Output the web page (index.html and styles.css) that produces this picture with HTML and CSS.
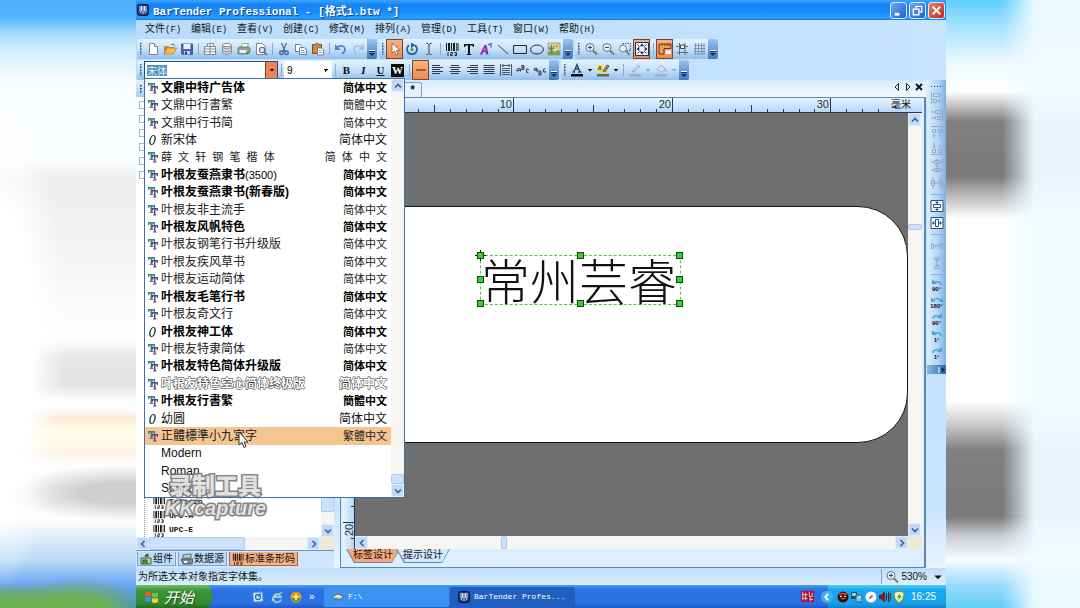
FILE: index.html
```html
<!DOCTYPE html>
<html lang="zh-CN">
<head>
    <meta charset="UTF-8">
    <meta name="viewport" content="width=device-width, initial-scale=1.0">
    <title>BarTender Professional - [格式1.btw *]</title>
    <link rel="stylesheet" href="styles.css">
</head>
<body>
    <!-- icon sprite -->
    <svg class="sprite" aria-hidden="true">
        <symbol id="i-app" viewBox="0 0 12 12"><rect x=".5" y=".5" width="11" height="11" rx="2" fill="#1a3a7c" stroke="#0b1c4c"/><path d="M3 2v5q0 2 1.500 2M6 2v8M9 2v5q0 2-1.500 2M4.500 2v5M7.500 2v5" stroke="#dfeaff" fill="none"/></symbol>
        <symbol id="i-new" viewBox="0 0 14 14"><path d="M3.500 1.500h5l3 3v8h-8z" fill="#fff" stroke="#7b8797"/><path d="M8.500 1.500v3h3" fill="#dde6f0" stroke="#7b8797"/></symbol>
        <symbol id="i-open" viewBox="0 0 14 14"><path d="M1 12V4h4l1 1h5v7z" fill="#c98a2b"/><path d="M1 12l3-6h9.500l-3 6z" fill="#f4bb52" stroke="#a7701c" stroke-width=".6"/><path d="M8 2.500q3-1.500 4 1.500" stroke="#4a76b8" fill="none"/></symbol>
        <symbol id="i-save" viewBox="0 0 14 14"><path d="M1.500 2h11v10.500h-10l-1-1z" fill="#4a5fb4" stroke="#2c3a80" stroke-width=".7"/><path d="M3.500 2h7v5h-7z" fill="#eef2fb"/><path d="M4 9h6v3.500H4z" fill="#c7d0ea"/><path d="M5 9.500h2v3H5z" fill="#2c3a80"/></symbol>
        <symbol id="i-table" viewBox="0 0 14 14"><path d="M4.500 1.500h6v4h-6z" fill="#fff" stroke="#7f8b98"/><path d="M1.500 4.500h11v8h-11zM1.500 7h11M1.500 9.800h11M7 1.500v11" fill="#fff" stroke="#7c8894"/></symbol>
        <symbol id="i-db" viewBox="0 0 14 14"><path d="M2.500 3v8q4.500 3 9 0V3" fill="#d6dade" stroke="#858d94"/><ellipse cx="7" cy="3" rx="4.500" ry="1.700" fill="#f4f6f7" stroke="#858d94"/><path d="M2.500 5.500q4.500 3 9 0M2.500 8.500q4.500 3 9 0" fill="none" stroke="#858d94"/></symbol>
        <symbol id="i-print" viewBox="0 0 14 14"><path d="M4 6l1.500-4.500h6L10 6z" fill="#fff" stroke="#7d8a83" stroke-width=".7"/><path d="M1 6l2-1h8.500l1.500 1v4l-2 2H1z" fill="#8ba295" stroke="#4d6a58" stroke-width=".7"/><path d="M2.500 8h7v3h-7z" fill="#eef5ef"/><path d="M9 10h3v2H9z" fill="#35a046"/></symbol>
        <symbol id="i-preview" viewBox="0 0 14 14"><path d="M2.500 1.500h6l2.500 2.500v8.500H2.500z" fill="#fff" stroke="#7d8896"/><circle cx="8" cy="8" r="2.800" fill="#cfe6f8" stroke="#49606f"/><path d="M10 10l3 3" stroke="#8a6a42" stroke-width="1.600"/></symbol>
        <symbol id="i-cut" viewBox="0 0 14 14"><path d="M4.500 1l3.500 8M9.500 1L6 9" stroke="#47648f" stroke-width="1.200"/><circle cx="4.500" cy="10.800" r="1.800" fill="none" stroke="#3c5d96" stroke-width="1.300"/><circle cx="9.500" cy="10.800" r="1.800" fill="none" stroke="#3c5d96" stroke-width="1.300"/></symbol>
        <symbol id="i-copy" viewBox="0 0 14 14"><path d="M1.500 2.500h4.500l2 2v5H1.500z" fill="#fff" stroke="#6684b4"/><path d="M5.500 5.500h4.500l2.500 2v5h-7z" fill="#e8f1fc" stroke="#6684b4"/><path d="M7 8.500h3M7 10.500h4" stroke="#8aa5cf"/></symbol>
        <symbol id="i-paste" viewBox="0 0 14 14"><path d="M1.500 2.500h9v9h-9z" fill="#d08a3a" stroke="#7e4c1c"/><path d="M4 1h4v3H4z" fill="#8f8d88"/><path d="M6.500 6h4l2 2v5h-6z" fill="#fff" stroke="#6b6a75" stroke-width=".8"/><path d="M8 8.500h2M8 10.500h3" stroke="#98a2b5"/></symbol>
        <symbol id="i-undo" viewBox="0 0 14 14"><path d="M3 5q7-3 8 2 0 3-3 5" fill="none" stroke="#5484c8" stroke-width="1.700"/><path d="M1 2v6h6z" fill="#5484c8"/></symbol>
        <symbol id="i-redo" viewBox="0 0 14 14"><path d="M11 5Q4 2 3 7q0 3 3 5" fill="none" stroke="#a9bdd5" stroke-width="1.500"/><path d="M13 2v6H7z" fill="#a9bdd5"/></symbol>
        <symbol id="i-pointer" viewBox="0 0 14 14"><path d="M4 1v10l2.500-2 1.700 4 1.800-.8-1.700-3.700H12z" fill="#fff" stroke="#7a5a48" stroke-width=".8"/></symbol>
        <symbol id="i-rotate" viewBox="0 0 14 14"><path d="M4 3.200A5 5 0 1 0 10 3.200" fill="none" stroke="#1f5f9c" stroke-width="1.700"/><path d="M6 .5l4.500 2.700L6 6z" fill="#1f5f9c"/><circle cx="7" cy="7.500" r="1.500" fill="#3f9b4d"/></symbol>
        <symbol id="i-ibeam" viewBox="0 0 14 14"><path d="M4.500 1.500H6l1 1 1-1h1.500M4.500 12.500H6l1-1 1 1h1.500M7 2.500v9" fill="none" stroke="#2f3a4a"/></symbol>
        <symbol id="i-barcode" viewBox="0 0 14 14"><path d="M1 1h1v8H1zM3 1h2v8H3zM6 1h1v8H6zM8 1h2v8H8zM11 1h.7v8H11zM12.500 1h1v8h-1z" fill="#1b1b1b"/><path d="M3 10v4M5.500 10.500h2v1.500h-2v1.500h2M9.500 10.500h2v3h-2M10 12h1.500" stroke="#1b1b1b" fill="none" stroke-width=".9"/></symbol>
        <symbol id="i-text" viewBox="0 0 14 14"><path d="M2 2h10v3h-1L10.500 3.500H8V12h1.200v1H4.800v-1H6V3.500H3.500L3 5H2z" fill="#151515"/></symbol>
        <symbol id="i-wordart" viewBox="0 0 14 14"><path d="M1 12.500L5.500 3h2l2 9.500H7L6.600 10H4.300l-1 2.500zM5 8.500h1.500L6 5.500z" fill="#8b2d9c"/><path d="M9 3l3-1.500v4" fill="none" stroke="#3461b3" stroke-width="1.200"/></symbol>
        <symbol id="i-line" viewBox="0 0 14 14"><path d="M2 3l10 9" stroke="#33455e"/></symbol>
        <symbol id="i-rect" viewBox="0 0 14 14"><path d="M.5 3.500h13v8H.5z" fill="none" stroke="#1e2b3a"/></symbol>
        <symbol id="i-ellipse" viewBox="0 0 14 14"><ellipse cx="7" cy="7.500" rx="6.400" ry="4.500" fill="none" stroke="#1e2b3a"/></symbol>
        <symbol id="i-picture" viewBox="0 0 14 14"><path d="M1 1h12v12H1z" fill="#d9d3a5" stroke="#8b8f67" stroke-width=".7"/><path d="M1 10l4-2 3 2 3-2 2 2v3H1z" fill="#7fa04a"/><circle cx="9.500" cy="4" r="1.500" fill="#e0a13a"/><path d="M4.500 3v8M2.500 5v2h2M6.500 4.500v2h-2" stroke="#3d8f46" fill="none" stroke-width="1.200"/></symbol>
        <symbol id="i-zoomin" viewBox="0 0 14 14"><circle cx="6" cy="5.500" r="4" fill="#e3f1fc" stroke="#5f7488"/><path d="M4 5.500h4M6 3.500v4" stroke="#2f4a63"/><path d="M9 8.500l4 4" stroke="#8b7250" stroke-width="1.800"/></symbol>
        <symbol id="i-zoomout" viewBox="0 0 14 14"><circle cx="6" cy="5.500" r="4" fill="#e3f1fc" stroke="#5f7488"/><path d="M4 5.500h4" stroke="#2f4a63"/><path d="M9 8.500l4 4" stroke="#8b7250" stroke-width="1.800"/></symbol>
        <symbol id="i-zoomarea" viewBox="0 0 14 14"><path d="M4.500 1.500h8v7h-8z" fill="none" stroke="#3f556c" stroke-dasharray="1.500 1"/><circle cx="5" cy="6.500" r="3.500" fill="#e3f1fc" stroke="#6d8296"/><path d="M8 9l3.500 4" stroke="#8b7250" stroke-width="1.600"/></symbol>
        <symbol id="i-fit" viewBox="0 0 14 14"><path d="M.5 .5h13v13H.5z" fill="#eef6ff" stroke="#22324c"/><path d="M7 1.500l2.300 2.800H4.700zM7 12.500l2.300-2.800H4.700zM1.500 7l2.800-2.300v4.600zM12.500 7L9.700 4.700v4.600z" fill="#20365e"/><path d="M2.500 2.500l2 2M11.500 2.500l-2 2M2.500 11.500l2-2M11.500 11.500l-2-2" stroke="#20365e"/></symbol>
        <symbol id="i-ruler" viewBox="0 0 14 14"><path d="M1 2h12v4.500H6V12H1z" fill="#f0a04e" stroke="#6e2f0e"/><path d="M4 2v2M6.500 2v2M9 2v2M11 2v2" stroke="#6e2f0e" stroke-width=".8"/><path d="M7.500 8.500h5.500V12H7.500z" fill="#fff"/></symbol>
        <symbol id="i-snap" viewBox="0 0 14 14"><path d="M1 4.500h3M10 4.500h3M4.500 1v12M10 1v12M2 10.500h11" stroke="#5c6f86" fill="none"/><path d="M5.500 3h4v3.500h-4z" fill="#eaf4fd" stroke="#38495c"/></symbol>
        <symbol id="i-grid" viewBox="0 0 14 14"><path d="M2 3.500h11M2 6.500h11M2 9.500h11M3.500 1v11M6.500 1v11M9.500 1v11M12 1v11M2 12h11" stroke="#6f86a2" stroke-width=".8"/></symbol>
        <symbol id="i-single" viewBox="0 0 14 14"><path d="M2 7h10" stroke="#703717" stroke-width="1.200"/></symbol>
        <symbol id="i-left" viewBox="0 0 14 14"><path d="M1 2.500h8M1 4.500h11M1 6.500h8M1 8.500h11M1 10.500h8" stroke="#2d3c50"/></symbol>
        <symbol id="i-center" viewBox="0 0 14 14"><path d="M3 2.500h8M1.500 4.500h11M3 6.500h8M1.500 8.500h11M3 10.500h8" stroke="#2d3c50"/></symbol>
        <symbol id="i-right" viewBox="0 0 14 14"><path d="M5 2.500h8M2 4.500h11M5 6.500h8M2 8.500h11M5 10.500h8" stroke="#2d3c50"/></symbol>
        <symbol id="i-just" viewBox="0 0 14 14"><path d="M1.500 2.500h11M1.500 4.500h11M1.500 6.500h11M1.500 8.500h11M1.500 10.500h11" stroke="#2d3c50"/></symbol>
        <symbol id="i-fulljust" viewBox="0 0 14 14"><path d="M1.500 1v12M12.500 1v12M3 2.500h8M3 5.500h8M3 7.500h8M3 9.500h8M3 11.500h8M4.500 1L3 2.500 4.500 4M9.500 1L11 2.500 9.500 4" stroke="#3c4a5c" stroke-width=".9" fill="none"/></symbol>
        <symbol id="i-arcup" viewBox="0 0 14 14"><path d="M1 8.500q0-3 2-3t1.500 3M1.200 7.500h3M6 2.500v4h1.500q1.300-1 0-2 1-1-.3-2zM13 6.500q-2.500-1.500-2.500 1t2 2" fill="none" stroke="#33414f" stroke-width="1.100"/></symbol>
        <symbol id="i-arcdown" viewBox="0 0 14 14"><path d="M1 7.500q1-3 2.500-2t.5 3.500M1.200 6.800l3 1M6 8v4h1.500q1.300-1 0-2 1-1-.3-2zM12.500 5.500q-2.500.5-2 2.500t2.500.5" fill="none" stroke="#33414f" stroke-width="1.100"/></symbol>
        <symbol id="i-color" viewBox="0 0 14 14"><path d="M2.500 9h2.300M8 9h3.500M3.800 9L7 1.500 10 9M5 6h4" stroke="#233f7a" stroke-width="1.300" fill="none"/><path d="M1 11h12v2.500H1z" fill="#0a0a0a"/></symbol>
        <symbol id="i-high" viewBox="0 0 14 14"><path d="M1 2h6v7H1z" fill="#f0dc4c"/><path d="M2 7l2-4 1 4M7 8l4-6 2 1-4 6z" fill="#b09a38" stroke="#4b431e" stroke-width=".8"/><path d="M1 11h12v2.500H1z" fill="#6f6428"/></symbol>
        <symbol id="i-pen" viewBox="0 0 14 14"><path d="M4 8l6-6 2 1.500-6 5.500H4z" fill="#c3d3e6" stroke="#93a7bf" stroke-width=".8"/><path d="M1 11h12v2.500H1z" fill="#9db0c6"/></symbol>
        <symbol id="i-bucket" viewBox="0 0 14 14"><path d="M3 6l4-4 4 4-4 3.500z" fill="#d7e2ee" stroke="#93a7bf"/><path d="M11.500 6q1.500 2.500 0 3" fill="none" stroke="#93a7bf"/><path d="M1 11h12v2.500H1z" fill="#9db0c6"/></symbol>
        <symbol id="i-tt" viewBox="0 0 12 12"><path d="M1 1h7v3H7L6.500 2.500h-1V8h1v1h-4V8h1V2.500h-1L2 4H1z" fill="#2f8a86"/><path d="M4.500 4H11v3h-1l-.5-1.500h-1V10.500h1v1H6v-1h1V5.500H6L5.500 7h-1z" fill="#6b3f86"/></symbol>
        <symbol id="i-ot" viewBox="0 0 12 12"><path fill-rule="evenodd" d="M6.500 1Q9.500 1 8.700 5.500 7.700 11 4.300 11 1.500 11 2.300 6.500 3.300 1 6.500 1zM6.300 2Q4.500 2 3.800 6.500 3.300 10 4.600 10 6.400 10 7.200 5.500 7.700 2 6.300 2z" fill="#2a4f4f"/></symbol>
        <symbol id="i-alignl" viewBox="0 0 14 14"><path d="M1.500 1v12M3.500 2.500h6v3h-6zM3.500 8.500h3v3h-3zM8 10h4M10 8.500L8 10l2 1.500"/></symbol>
        <symbol id="i-alignr" viewBox="0 0 14 14"><path d="M12.500 1v12M5.500 2.500h5v3h-5zM7.500 8.500h3v3h-3zM1 4h3M1 10h5M4 8.500L6 10l-2 1.500"/></symbol>
        <symbol id="i-alignt" viewBox="0 0 14 14"><path d="M1 1.500h12M2.500 4.500h3v3h-3zM8.500 4.500h3v3h-3zM4 13V9M10 13V9M2.500 10.500L4 9l1.500 1.500"/></symbol>
        <symbol id="i-alignb" viewBox="0 0 14 14"><path d="M1 12.500h12M2.500 7.500h3v3h-3zM8.500 7.500h3v3h-3zM4 1v5M10 3v3M2.500 4.500L4 6l1.500-1.500"/></symbol>
        <symbol id="i-midv" viewBox="0 0 14 14"><path d="M4.500 1.500h5v3h-5zM4.500 9.500h5v3h-5zM7 0v14M1 3h3M10 3h3M1 11h3M10 11h3M5 7h4"/></symbol>
        <symbol id="i-midh" viewBox="0 0 14 14"><path d="M1.500 4.500h3v5h-3zM9.500 4.500h3v5h-3zM0 7h14M3 1v3M3 10v3M11 1v3M11 10v3"/></symbol>
        <symbol id="i-pagev" viewBox="0 0 14 14"><path d="M1 1.500h12v11H1z" fill="#f2f9ff"/><path d="M3.500 5.500h7v3h-7zM7 2v3M7 9v3M5.500 3.500h3M5.500 10.500h3"/></symbol>
        <symbol id="i-pageh" viewBox="0 0 14 14"><path d="M1 1.500h12v11H1z" fill="#f2f9ff"/><path d="M5.500 3.500h3v7h-3zM2 7h3M9 7h3M3.500 5.500v3M10.500 5.500v3"/></symbol>
        <symbol id="i-disth" viewBox="0 0 14 14"><path d="M1.500 4.500h2v5h-2zM10.500 4.500h2v5h-2zM4.500 7h5M6 5.500L4.500 7 6 8.500M8 5.500L9.500 7 8 8.500"/></symbol>
        <symbol id="i-distv" viewBox="0 0 14 14"><path d="M4.500 1.500h5v2h-5zM4.500 10.500h5v2h-5zM7 4v6M5.500 5.500L7 4l1.500 1.500M5.500 8.500L7 10l1.500-1.500"/></symbol>
        <symbol id="i-ccw" viewBox="0 0 14 7"><path d="M4 3h4q3 0 3 3" fill="none" stroke="#4aa3d8" stroke-width="1.400"/><path d="M2 0v5h5z" fill="#4aa3d8"/></symbol>
        <symbol id="i-cw" viewBox="0 0 14 7"><path d="M10 3H6Q3 3 3 6" fill="none" stroke="#4aa3d8" stroke-width="1.400"/><path d="M12 0v5H7z" fill="#4aa3d8"/></symbol>
        <symbol id="i-both" viewBox="0 0 14 7"><path d="M3 5q4-5 8 0" fill="none" stroke="#4aa3d8" stroke-width="1.400"/><path d="M1 1v5h4zM13 1v5H9z" fill="#4aa3d8"/></symbol>
        <symbol id="i-comp" viewBox="0 0 12 12"><path d="M1 5h10v6H1z" fill="#b9d7a0" stroke="#3b5d34"/><path d="M3 11V7h4v4M5 4q0-3 3-3v3" fill="#3f9149" stroke="#2c5a31"/></symbol>
        <symbol id="i-src" viewBox="0 0 12 12"><path d="M2 2l8-1v4H2z" fill="#c9d1d8" stroke="#5d6a76"/><path d="M0 6h12l-1 5H2z" fill="#7f8c98" stroke="#47535f"/><path d="M3 8h3v2H3z" fill="#fff"/></symbol>
        <symbol id="i-win" viewBox="0 0 14 14"><path d="M1 3q3-1.500 5.500 0v4Q4 5.500 1 7z" fill="#f0592b"/><path d="M7.500 3.300q2.500 1.500 5.500 0v4q-3 1.500-5.500 0z" fill="#7fc241"/><path d="M1 8q3-1.500 5.500 0v4Q4 10.500 1 12z" fill="#3f8ff0"/><path d="M7.500 8.300q2.500 1.500 5.500 0v4q-3 1.500-5.500 0z" fill="#ffce3a"/></symbol>
        <symbol id="i-msg" viewBox="0 0 12 12"><path d="M1 2l9-1 1 9-9 1z" fill="#d6eefc" stroke="#6ab0dc"/><circle cx="6" cy="6" r="2.500" fill="none" stroke="#2b6fa8" stroke-width="1.300"/><path d="M6 6l3-4" stroke="#2b6fa8"/></symbol>
        <symbol id="i-ie" viewBox="0 0 12 12"><path d="M10 8.500A4 4 0 1 1 10 6H3.500" fill="none" stroke="#7fd0ff" stroke-width="1.900"/><path d="M1 10Q3 3 11.500 1.500" fill="none" stroke="#f2cf52" stroke-width="1.200"/></symbol>
        <symbol id="i-plus" viewBox="0 0 12 12"><circle cx="6" cy="6" r="5.500" fill="#dd9a1d"/><path d="M1 7a5.500 5.500 0 0 0 10 0z" fill="#5a9b35"/><path d="M3 6h6M6 3v6" stroke="#fff2a0" stroke-width="1.600"/></symbol>
        <symbol id="i-drive" viewBox="0 0 12 12"><path d="M0 6l5-3 7 2-4 4-6-1z" fill="#b9c0c4" stroke="#4b565f" stroke-width=".8"/><path d="M2 5.500l4-1.500 4 1.500-4 1z" fill="#eceff0"/><path d="M3 7.500l5 1" stroke="#39a045"/></symbol>
        <symbol id="i-red" viewBox="0 0 14 14"><path d="M0 1h14v12H0z" fill="#a3173a"/><path d="M2 2v9M5 3v8M1 5h6M1 9h6M9 2v5h3V3M9 10h4M10 8v4" stroke="#f5c9d2" fill="none"/></symbol>
        <symbol id="i-qq" viewBox="0 0 12 12"><circle cx="6" cy="6" r="5.500" fill="#3a0d0b"/><path d="M2 3.500q4-2 8 0" stroke="#e3482e" stroke-width="1.500" fill="none"/><path d="M3 7q3 3 6 0z" fill="#e3482e"/><circle cx="4" cy="5.300" r=".9" fill="#fff"/><circle cx="8" cy="5.300" r=".9" fill="#fff"/></symbol>
        <symbol id="i-net" viewBox="0 0 12 12"><path d="M0 1h6v7H0z" fill="#274c66"/><path d="M1 2h4v3H1z" fill="#86d7e8"/><path d="M5 4h6v7H5z" fill="#6cc3e4" stroke="#2c6684"/><path d="M6 8l4-3" stroke="#fff"/></symbol>
        <symbol id="i-clock" viewBox="0 0 12 12"><circle cx="6" cy="6" r="5.500" fill="#f4f7fb"/><path d="M4.500 7.500l3-3" stroke="#c8322a" stroke-width="1.600"/></symbol>
        <symbol id="i-sound" viewBox="0 0 12 12"><path d="M0 4h2l4-4v12L2 8H0z" fill="#7d1a24"/><path d="M7.500 2v8M9.500 1v10M11.300 2v8" stroke="#40242c"/></symbol>
        <symbol id="i-shield" viewBox="0 0 12 12"><path d="M6 0l5 1.500q.5 7-5 10.500Q.5 8.500 1 1.500z" fill="#e9f2c2" stroke="#6c8f26"/><path d="M7 2L4 6.500h2L5 10l3.500-5H6.500z" fill="#3e9a2b"/></symbol>
        <symbol id="i-up" viewBox="0 0 10 10"><path d="M2 6.500l3-3 3 3" fill="none" stroke="#3d5f94" stroke-width="1.600"/></symbol>
        <symbol id="i-down" viewBox="0 0 10 10"><path d="M2 3.500l3 3 3-3" fill="none" stroke="#3d5f94" stroke-width="1.600"/></symbol>
        <symbol id="i-prev" viewBox="0 0 10 10"><path d="M6.500 2l-3 3 3 3" fill="none" stroke="#3d5f94" stroke-width="1.600"/></symbol>
        <symbol id="i-next" viewBox="0 0 10 10"><path d="M3.500 2l3 3-3 3" fill="none" stroke="#3d5f94" stroke-width="1.600"/></symbol>
        <symbol id="i-more" viewBox="0 0 8 8"><path d="M1 1.500h6" stroke="#fff"/><path d="M1 2.500h6" stroke="#0d2c5c"/><path d="M1 4h6L4 7z" fill="#0d2c5c"/></symbol>
        <symbol id="i-caret" viewBox="0 0 8 8"><path d="M1.500 3h5L4 5.500z" fill="currentColor"/></symbol>
    </svg>

    <div class="desktop">
        <div class="side side-left"></div>

        <div class="app">
            <header class="titlebar">
                <svg class="icon12"><use href="#i-app"/></svg>
                <h1>BarTender Professional - [格式1.btw *]</h1>
                <button class="win-btn" aria-label="最小化"><svg viewBox="0 0 16 16"><path d="M4 12h5" stroke="#fff" stroke-width="3"/></svg></button>
                <button class="win-btn" aria-label="还原"><svg viewBox="0 0 16 16"><path d="M6.500 6V3.500h6v6H10M3.500 6.500h6v6h-6z" fill="none" stroke="#fff" stroke-width="1.400"/></svg></button>
                <button class="win-btn close" aria-label="关闭"><svg viewBox="0 0 16 16"><path d="M4 4l8 8M12 4l-8 8" stroke="#fff" stroke-width="2"/></svg></button>
            </header>

            <nav class="menubar">
                <button>文件<span>(F)</span></button>
                <button>编辑<span>(E)</span></button>
                <button>查看<span>(V)</span></button>
                <button>创建<span>(C)</span></button>
                <button>修改<span>(M)</span></button>
                <button>排列<span>(A)</span></button>
                <button>管理<span>(D)</span></button>
                <button>工具<span>(T)</span></button>
                <button>窗口<span>(W)</span></button>
                <button>帮助<span>(H)</span></button>
            </nav>

            <div class="toolbars">
                <div class="bar-row">
                    <div class="band">
                        <i class="grip"></i>
                        <button class="tool" aria-label="新建"><svg><use href="#i-new"/></svg></button>
                        <button class="tool" aria-label="打开"><svg><use href="#i-open"/></svg></button>
                        <button class="tool" aria-label="保存"><svg><use href="#i-save"/></svg></button>
                        <i class="sep"></i>
                        <button class="tool" aria-label="页面设置"><svg><use href="#i-table"/></svg></button>
                        <button class="tool" aria-label="数据库"><svg><use href="#i-db"/></svg></button>
                        <button class="tool" aria-label="打印"><svg><use href="#i-print"/></svg></button>
                        <button class="tool" aria-label="打印预览"><svg><use href="#i-preview"/></svg></button>
                        <i class="sep"></i>
                        <button class="tool" aria-label="剪切"><svg><use href="#i-cut"/></svg></button>
                        <button class="tool" aria-label="复制"><svg><use href="#i-copy"/></svg></button>
                        <button class="tool" aria-label="粘贴"><svg><use href="#i-paste"/></svg></button>
                        <i class="sep"></i>
                        <button class="tool" aria-label="撤消"><svg><use href="#i-undo"/></svg></button>
                        <button class="tool" aria-label="重做"><svg><use href="#i-redo"/></svg></button>
                        <button class="more" aria-label="更多"><svg><use href="#i-more"/></svg></button>
                    </div>
                    <div class="band">
                        <i class="grip"></i>
                        <button class="tool on" aria-label="选择"><svg><use href="#i-pointer"/></svg></button>
                        <button class="tool" aria-label="旋转"><svg><use href="#i-rotate"/></svg></button>
                        <button class="tool" aria-label="文本光标"><svg><use href="#i-ibeam"/></svg></button>
                        <i class="sep"></i>
                        <button class="tool" aria-label="条形码"><svg><use href="#i-barcode"/></svg></button>
                        <button class="tool" aria-label="文本"><svg><use href="#i-text"/></svg></button>
                        <button class="tool" aria-label="艺术字"><svg><use href="#i-wordart"/></svg></button>
                        <button class="tool" aria-label="线条"><svg><use href="#i-line"/></svg></button>
                        <button class="tool" aria-label="矩形"><svg><use href="#i-rect"/></svg></button>
                        <button class="tool" aria-label="椭圆"><svg><use href="#i-ellipse"/></svg></button>
                        <button class="tool" aria-label="图片"><svg><use href="#i-picture"/></svg></button>
                        <button class="more" aria-label="更多"><svg><use href="#i-more"/></svg></button>
                    </div>
                    <div class="band">
                        <i class="grip"></i>
                        <button class="tool" aria-label="放大"><svg><use href="#i-zoomin"/></svg></button>
                        <button class="tool" aria-label="缩小"><svg><use href="#i-zoomout"/></svg></button>
                        <button class="tool" aria-label="缩放区域"><svg><use href="#i-zoomarea"/></svg></button>
                        <button class="tool on" aria-label="适合窗口"><svg><use href="#i-fit"/></svg></button>
                        <i class="sep"></i>
                        <button class="tool on" aria-label="标尺"><svg><use href="#i-ruler"/></svg></button>
                        <button class="tool" aria-label="对齐"><svg><use href="#i-snap"/></svg></button>
                        <button class="tool" aria-label="网格"><svg><use href="#i-grid"/></svg></button>
                        <button class="more" aria-label="更多"><svg><use href="#i-more"/></svg></button>
                    </div>
                </div>

                <div class="bar-row">
                    <div class="band">
                        <i class="grip"></i>
                        <div class="combo">
                            <input type="text" value="宋体" aria-label="字体">
                            <button aria-label="字体列表"><svg><use href="#i-caret"/></svg></button>

                            <div class="font-popup">
                                <ul role="listbox" aria-label="字体">
                                    <li class="heavy"><svg><use href="#i-tt"/></svg><span>文鼎中特广告体</span><span>简体中文</span></li>
                                    <li class="hand"><svg><use href="#i-tt"/></svg><span>文鼎中行書繁</span><span>簡體中文</span></li>
                                    <li class="hand"><svg><use href="#i-tt"/></svg><span>文鼎中行书简</span><span>简体中文</span></li>
                                    <li class="plain"><svg><use href="#i-ot"/></svg><span>新宋体</span><span>简体中文</span></li>
                                    <li class="hand spaced"><svg><use href="#i-tt"/></svg><span>薛  文  轩  钢  笔  楷  体</span><span>简  体  中  文</span></li>
                                    <li class="heavy"><svg><use href="#i-tt"/></svg><span>叶根友蚕燕隶书<small>(3500)</small></span><span>简体中文</span></li>
                                    <li class="heavy"><svg><use href="#i-tt"/></svg><span>叶根友蚕燕隶书(新春版)</span><span>简体中文</span></li>
                                    <li class="hand"><svg><use href="#i-tt"/></svg><span>叶根友非主流手</span><span>简体中文</span></li>
                                    <li class="heavy"><svg><use href="#i-tt"/></svg><span>叶根友风帆特色</span><span>简体中文</span></li>
                                    <li class="hand"><svg><use href="#i-tt"/></svg><span>叶根友钢笔行书升级版</span><span>简体中文</span></li>
                                    <li class="hand"><svg><use href="#i-tt"/></svg><span>叶根友疾风草书</span><span>简体中文</span></li>
                                    <li class="hand"><svg><use href="#i-tt"/></svg><span>叶根友运动简体</span><span>简体中文</span></li>
                                    <li class="heavy"><svg><use href="#i-tt"/></svg><span>叶根友毛笔行书</span><span>简体中文</span></li>
                                    <li class="hand"><svg><use href="#i-tt"/></svg><span>叶根友奇文行</span><span>简体中文</span></li>
                                    <li class="heavy"><svg><use href="#i-ot"/></svg><span>叶根友神工体</span><span>简体中文</span></li>
                                    <li class="hand"><svg><use href="#i-tt"/></svg><span>叶根友特隶简体</span><span>简体中文</span></li>
                                    <li class="heavy"><svg><use href="#i-tt"/></svg><span>叶根友特色简体升级版</span><span>简体中文</span></li>
                                    <li class="outline"><svg><use href="#i-tt"/></svg><span>叶根友特色空心简体终极版</span><span>简体中文</span></li>
                                    <li class="heavy"><svg><use href="#i-tt"/></svg><span>叶根友行書繁</span><span>簡體中文</span></li>
                                    <li class="plain"><svg><use href="#i-ot"/></svg><span>幼圆</span><span>简体中文</span></li>
                                    <li class="hand current"><svg><use href="#i-tt"/></svg><span>正體標準小九宮字</span><span>繁體中文</span></li>
                                    <li class="plain"><svg></svg><span>Modern</span></li>
                                    <li class="plain"><svg></svg><span>Roman</span></li>
                                    <li class="plain"><svg></svg><span>Script</span></li>
                                </ul>
                                <div class="vscroll">
                                    <button aria-label="向上"><svg><use href="#i-up"/></svg></button>
                                    <i class="track"></i>
                                    <i class="thumb"></i>
                                    <button aria-label="向下"><svg><use href="#i-down"/></svg></button>
                                </div>
                                <div class="watermark"><b>录制工具</b><em>KKcapture</em></div>
                                <svg class="cursor" viewBox="0 0 12 18"><path d="M1 1v13l3-2.500 2 5 2-1-2-4.500h4z" fill="#fff" stroke="#333"/></svg>
                            </div>
                        </div>
                        <i class="sep"></i>
                        <label class="size"><select aria-label="字号"><option>9</option></select></label>
                        <i class="sep"></i>
                        <button class="tool letter"><b>B</b></button>
                        <button class="tool letter"><em>I</em></button>
                        <button class="tool letter"><u>U</u></button>
                        <button class="tool letter"><span class="invert">W</span></button>
                        <i class="sep"></i>
                        <button class="tool on" aria-label="单行"><svg><use href="#i-single"/></svg></button>
                        <button class="tool" aria-label="左对齐"><svg><use href="#i-left"/></svg></button>
                        <button class="tool" aria-label="居中"><svg><use href="#i-center"/></svg></button>
                        <button class="tool" aria-label="右对齐"><svg><use href="#i-right"/></svg></button>
                        <button class="tool" aria-label="两端对齐"><svg><use href="#i-just"/></svg></button>
                        <button class="tool" aria-label="分散对齐"><svg><use href="#i-fulljust"/></svg></button>
                        <button class="tool" aria-label="上弧"><svg><use href="#i-arcup"/></svg></button>
                        <button class="tool" aria-label="下弧"><svg><use href="#i-arcdown"/></svg></button>
                        <button class="more" aria-label="更多"><svg><use href="#i-more"/></svg></button>
                    </div>
                    <div class="band">
                        <i class="grip"></i>
                        <button class="tool" aria-label="字体颜色"><svg><use href="#i-color"/></svg></button>
                        <button class="drop" aria-label="颜色列表"><svg><use href="#i-caret"/></svg></button>
                        <button class="tool" aria-label="突出显示"><svg><use href="#i-high"/></svg></button>
                        <button class="drop" aria-label="突出显示列表"><svg><use href="#i-caret"/></svg></button>
                        <i class="sep"></i>
                        <button class="tool" disabled aria-label="线条颜色"><svg><use href="#i-pen"/></svg></button>
                        <button class="drop" disabled aria-label="线条列表"><svg><use href="#i-caret"/></svg></button>
                        <button class="tool" disabled aria-label="填充颜色"><svg><use href="#i-bucket"/></svg></button>
                        <button class="drop" disabled aria-label="填充列表"><svg><use href="#i-caret"/></svg></button>
                        <button class="more" aria-label="更多"><svg><use href="#i-more"/></svg></button>
                    </div>
                </div>
            </div>

            <main class="work">
                <aside class="panel">
                    <div class="panel-bar"><i class="grip"></i></div>
                    <div class="panel-body">
                        <div class="tree">
                            <ul class="roots"><li></li><li></li><li></li><li></li><li></li><li></li></ul>
                            <ul class="codes">
                                <li><svg><use href="#i-barcode"/></svg>Telepen</li>
                                <li><svg><use href="#i-barcode"/></svg>UPC-A</li>
                                <li><svg><use href="#i-barcode"/></svg>UPC-E</li>
                            </ul>
                        </div>
                        <div class="vscroll">
                            <i class="track"></i>
                            <i class="thumb"></i>
                            <i class="gap"></i>
                            <button aria-label="向下"><svg><use href="#i-down"/></svg></button>
                        </div>
                    </div>
                    <div class="hscroll">
                        <button aria-label="向左"><svg><use href="#i-prev"/></svg></button>
                        <i class="thumb"></i>
                        <i class="track"></i>
                        <button aria-label="向右"><svg><use href="#i-next"/></svg></button>
                        <i class="corner"></i>
                    </div>
                    <div class="panel-tabs">
                        <button><svg><use href="#i-comp"/></svg>组件</button>
                        <button><svg><use href="#i-src"/></svg>数据源</button>
                        <button class="on"><svg><use href="#i-barcode"/></svg>标准条形码</button>
                    </div>
                </aside>

                <section class="doc">
                    <div class="doc-tabs">
                        <button class="doc-tab" aria-label="格式1.btw">*</button>
                        <div class="doc-nav">
                            <button aria-label="上一个"><svg viewBox="0 0 10 10"><path d="M6.500 1.500v7L3 5z" fill="none" stroke="#222"/></svg></button>
                            <button aria-label="下一个"><svg viewBox="0 0 10 10"><path d="M3.500 1.500v7L7 5z" fill="none" stroke="#222"/></svg></button>
                            <button aria-label="关闭"><svg viewBox="0 0 10 10"><path d="M2 2l6 6M8 2L2 8" stroke="#111" stroke-width="1.800"/></svg></button>
                        </div>
                    </div>
                    <div class="doc-frame">
                        <div class="ruler-h">
                            <svg id="rulerTop"></svg>
                            <span>毫米</span>
                        </div>
                        <div class="doc-mid">
                            <div class="ruler-v"><svg id="rulerLeft"></svg></div>
                            <div class="view">
                                <div class="canvas">
                                    <div class="label-page">
                                        <div class="text-object">常州芸睿
                                            <i class="h nw"></i><i class="h n"></i><i class="h ne"></i>
                                            <i class="h w"></i><i class="h e"></i>
                                            <i class="h sw"></i><i class="h s"></i><i class="h se"></i>
                                        </div>
                                    </div>
                                    <div class="vscroll">
                                        <button aria-label="向上"><svg><use href="#i-up"/></svg></button>
                                        <i class="track short"></i>
                                        <i class="thumb"></i>
                                        <i class="track"></i>
                                        <button aria-label="向下"><svg><use href="#i-down"/></svg></button>
                                    </div>
                                </div>
                                <div class="hscroll">
                                    <button aria-label="向左"><svg><use href="#i-prev"/></svg></button>
                                    <i class="track short"></i>
                                    <i class="thumb"></i>
                                    <i class="track"></i>
                                    <button aria-label="向右"><svg><use href="#i-next"/></svg></button>
                                    <i class="corner"></i>
                                </div>
                            </div>
                        </div>
                        <div class="sheet-tabs">
                            <button class="on"><span>标签设计</span></button>
                            <button><span>提示设计</span></button>
                        </div>
                    </div>
                </section>

                <div class="dock">
                    <div class="dock-bar">
                        <i class="dots"></i>
                        <button class="dim" aria-label="左边对齐"><svg><use href="#i-alignl"/></svg></button>
                        <button class="dim" aria-label="右边对齐"><svg><use href="#i-alignr"/></svg></button>
                        <button class="dim" aria-label="顶端对齐"><svg><use href="#i-alignt"/></svg></button>
                        <button class="dim" aria-label="底端对齐"><svg><use href="#i-alignb"/></svg></button>
                        <button class="dim" aria-label="垂直居中"><svg><use href="#i-midv"/></svg></button>
                        <button class="dim" aria-label="水平居中"><svg><use href="#i-midh"/></svg></button>
                        <i class="rule"></i>
                        <button aria-label="页面垂直居中"><svg><use href="#i-pagev"/></svg></button>
                        <button aria-label="页面水平居中"><svg><use href="#i-pageh"/></svg></button>
                        <i class="rule"></i>
                        <button class="dim" aria-label="横向分布"><svg><use href="#i-disth"/></svg></button>
                        <button class="dim" aria-label="纵向分布"><svg><use href="#i-distv"/></svg></button>
                        <i class="rule"></i>
                        <button class="turn"><svg><use href="#i-ccw"/></svg>90°</button>
                        <button class="turn"><svg><use href="#i-both"/></svg>180°</button>
                        <button class="turn"><svg><use href="#i-cw"/></svg>90°</button>
                        <button class="turn"><svg><use href="#i-ccw"/></svg>1°</button>
                        <button class="turn"><svg><use href="#i-cw"/></svg>1°</button>
                        <button class="dock-more" aria-label="更多"><svg viewBox="0 0 8 8"><path d="M1 1v6" stroke="#fff"/><path d="M3.500 1v6L7 4z" stroke="none" fill="#0d2c5c"/></svg></button>
                    </div>
                </div>
            </main>

            <footer class="status">
                <p>为所选文本对象指定字体集。</p>
                <button><svg><use href="#i-zoomin"/></svg>530%<svg class="zoom-caret"><use href="#i-caret"/></svg></button>
            </footer>

            <div class="taskbar">
                <button class="start"><svg><use href="#i-win"/></svg>开始</button>
                <div class="quick">
                    <svg><use href="#i-msg"/></svg>
                    <svg><use href="#i-ie"/></svg>
                    <svg><use href="#i-plus"/></svg>
                    <span>»</span>
                </div>
                <button class="task"><svg><use href="#i-drive"/></svg>F:\</button>
                <button class="task on"><svg><use href="#i-app"/></svg>BarTender Profes...</button>
                <svg class="ime"><use href="#i-red"/></svg>
                <div class="tray">
                    <button class="hide" aria-label="隐藏"><svg viewBox="0 0 10 10"><path d="M6 2.500L3.500 5 6 7.500" fill="none" stroke="#fff" stroke-width="1.500"/></svg></button>
                    <svg><use href="#i-qq"/></svg>
                    <svg><use href="#i-net"/></svg>
                    <svg><use href="#i-clock"/></svg>
                    <svg><use href="#i-sound"/></svg>
                    <svg><use href="#i-shield"/></svg>
                    <time>16:25</time>
                </div>
            </div>
        </div>

        <div class="side side-right"></div>
    </div>
    <script src="rulers.js"></script>
</body>
</html>
```

FILE: styles.css
```css
* {
    box-sizing: border-box;
}
body {
    margin: 0;
    font-family: "Liberation Sans", "Noto Sans CJK SC", sans-serif;
    font-size: 10px;
    line-height: 12px;
    color: #111;
    background: #fff;
}
button {
    font: inherit;
    color: inherit;
    border: 0;
    padding: 0;
    margin: 0;
    background: none;
}
ul, p, h1 {
    list-style: none;
    margin: 0;
    padding: 0;
}
svg {
    display: block;
    flex: none;
}
.sprite {
    display: none;
}
.desktop {
    display: grid;
    grid-template-columns: 136fr 810fr 134fr;
    height: 100vh;
    overflow: hidden;
}

/* soft backdrop on both sides */
.side-left {
    background:
        radial-gradient(ellipse 64px 250px at 0 56%, #fff 50%, transparent),
        radial-gradient(ellipse 80px 30px at 55% 100%, rgba(110, 178, 80, .95) 40%, transparent),
        radial-gradient(ellipse 90px 26px at 0 100%, rgba(110, 178, 80, .95) 40%, transparent),
        linear-gradient(transparent 408px, rgba(255, 226, 204, .8) 418px, rgba(255, 253, 228, .9) 430px, rgba(255, 240, 222, .8) 452px, transparent 464px),
        radial-gradient(ellipse 120px 28px at 90% 493px, rgba(200, 202, 202, .9) 35%, transparent),
        linear-gradient(transparent 340px, rgba(224, 224, 224, .8) 358px, rgba(220, 220, 220, .8) 385px, transparent 400px),
        linear-gradient(transparent 160px, rgba(226, 226, 226, .6) 180px, rgba(232, 232, 232, .5) 250px, transparent 330px),
        linear-gradient(#4aaeff 0, #55b4ff 18px, #a2d8fc 32px, #d4eefe 50px, #fafdff 84px, #fefefe 520px, #d9eafb 540px, #bcdaf5 560px, #6aa6f5 585px, #3c84ee 100%);
}
.side-right {
    background:
        linear-gradient(90deg, transparent 42%, rgba(240, 250, 255, .95) 66%),
        linear-gradient(#5fd0ff 0, #9fe0ff 4%, #e9f8ff 10%, #fff 15%, #808080 20%, #7a7a7a 29%, #b8b8b8 32%, #fff 36%, #fff 66%, #c8c8c8 70%, #808080 74%, #7a7a7a 85%, #c7cbd0 88%, #f8fdff 92%, #9fdcfb 96%, #63cdf8 100%);
}

.app {
    display: flex;
    flex-direction: column;
    min-width: 0;
    background: #c3e1fc;
}

/* title and menu */
.titlebar {
    display: flex;
    align-items: center;
    gap: 2px;
    height: 20px;
    padding: 0 1px;
    background: linear-gradient(#3aa4ff, #1583f6 25%, #178cfb 60%, #2aa0ff 90%, #1474e0);
    color: #fff;
}
.titlebar h1 {
    flex: 1;
    padding-left: 2px;
    font: bold 11px "Liberation Mono", "Noto Sans CJK SC", monospace;
    text-shadow: 1px 1px 1px #0a3d8c;
}
.icon12 {
    width: 12px;
    height: 12px;
}
.win-btn {
    width: 17px;
    height: 17px;
    border: 1px solid #d8ecff;
    border-radius: 3px;
    background: linear-gradient(135deg, #6ea8f5, #1f60d8);
}
.win-btn svg {
    width: 15px;
    height: 15px;
}
.win-btn.close {
    background: linear-gradient(135deg, #e5836c, #c12a14);
}
.menubar {
    display: flex;
    align-items: center;
    height: 18px;
    padding-left: 9px;
    background: linear-gradient(90deg, #b9dbfb, #c7e4fe);
}
.menubar button {
    width: 46px;
    text-align: left;
    white-space: nowrap;
}
.menubar span {
    font: 9px "Liberation Mono", monospace;
}

/* toolbars */
.toolbars {
    background: linear-gradient(90deg, #b9dbfb, #c7e4fe);
    padding: 1px 1px 0;
}
.bar-row {
    display: flex;
    gap: 2px;
    height: 20px;
}
.bar-row + .bar-row {
    margin-top: 1px;
}
.band {
    display: flex;
    align-items: stretch;
    background: linear-gradient(#e4f2fe, #c6e1fa 50%, #94bfe8);
    border-radius: 2px;
}
.grip {
    width: 7px;
    margin: 4px 0;
    background: radial-gradient(circle, #3c5a86 1px, transparent 1px) center / 7px 3px repeat-y;
}
.sep {
    width: 6px;
    margin: 4px 0;
    background: linear-gradient(#86abd6, #86abd6) center / 1px 100% no-repeat;
}
.tool {
    display: grid;
    place-items: center;
    width: 17px;
}
.tool svg {
    width: 14px;
    height: 14px;
}
.tool.on {
    border: 1px solid #6c4a3a;
    background: linear-gradient(#f7b184, #ee8a50);
}
.letter {
    font: bold 11px "Liberation Serif", serif;
}
.invert {
    width: 13px;
    line-height: 13px;
    color: #fff;
    background: #0c0c0c;
}
.more {
    display: flex;
    align-items: flex-end;
    justify-content: center;
    width: 10px;
    margin-left: 1px;
    padding-bottom: 2px;
    background: linear-gradient(#9cc4ee, #3f79bd);
    border-radius: 0 2px 2px 0;
}
.more svg {
    width: 8px;
    height: 8px;
}
.drop {
    display: grid;
    place-items: center;
    width: 9px;
}
.drop svg,
.combo > button svg {
    width: 8px;
    height: 8px;
}
.drop:disabled {
    color: #8ea7c4;
}
.combo {
    position: relative;
    display: flex;
    width: 134px;
    margin: 1px 0;
    border: 1px solid #264b86;
    background: #fff;
}
.combo input {
    flex: 1;
    min-width: 0;
    border: 0;
    padding: 0 0 0 2px;
    font: 10px "Noto Sans CJK SC", sans-serif;
    color: #d6f3ff;
    background: linear-gradient(#4b93bd, #4b93bd) 2px center / 20px 11px no-repeat;
}
.combo > button {
    display: grid;
    place-items: center;
    width: 12px;
    border-left: 1px solid #6c4a3a;
    background: #ee8450;
}
.size {
    display: flex;
    width: 48px;
    margin: 1px 0;
}
.size select {
    width: 100%;
    appearance: none;
    border: 0;
    padding: 0 3px;
    font: 10px "Liberation Sans", sans-serif;
    background: linear-gradient(135deg, #111 50%, transparent 50%) 42px 8px / 3px 3px no-repeat, linear-gradient(225deg, #111 50%, transparent 50%) 39px 8px / 3px 3px no-repeat, #fff;
}

/* font list over the workspace */
.font-popup {
    position: absolute;
    z-index: 5;
    top: 100%;
    left: -1px;
    display: flex;
    width: 261px;
    height: 420px;
    border: 1px solid #3d6fa8;
    background: #fff;
}
.font-popup ul {
    display: grid;
    flex: 1;
    grid-auto-rows: 1fr;
}
.font-popup li {
    display: flex;
    align-items: center;
    gap: 2px;
    min-height: 0;
    padding: 0 4px 0 2px;
    font-size: 12px;
    line-height: 16px;
    white-space: pre;
}
.font-popup li svg {
    width: 12px;
    height: 12px;
}
.font-popup li span:nth-of-type(2) {
    margin-left: auto;
}
.font-popup .heavy span {
    font-weight: 700;
    color: #000;
}
.font-popup .heavy small {
    font-size: 11px;
    font-weight: 400;
}
.font-popup .hand span {
    color: #222;
}
.font-popup .spaced,
.font-popup .heavy span:nth-of-type(2),
.font-popup .hand span:nth-of-type(2) {
    font-size: 11px;
}
.font-popup .outline span {
    color: #fff;
    font-weight: 700;
    -webkit-text-stroke: 1px #333;
    paint-order: stroke;
}
.font-popup .current {
    background: #f4c491;
}
.watermark {
    position: absolute;
    left: 20px;
    bottom: -22px;
    display: grid;
    color: #dcdcdc;
    opacity: .85;
    -webkit-text-stroke: 3px #707070;
    paint-order: stroke;
}
.watermark b {
    padding-left: 4px;
    font: 900 23px/25px "Noto Sans CJK SC", sans-serif;
}
.watermark em {
    font: italic bold 20px/22px "Liberation Sans", sans-serif;
}
.cursor {
    position: absolute;
    left: 93px;
    top: 352px;
    width: 12px;
    height: 18px;
}

/* scroll bars */
.vscroll {
    display: flex;
    flex-direction: column;
    width: 13px;
    background: #f6f5f1;
}
.hscroll {
    display: flex;
    height: 13px;
    background: #f6f5f1;
}
.vscroll button,
.hscroll button {
    display: grid;
    place-items: center;
    width: 13px;
    height: 13px;
    border: 1px solid #e2edfb;
    border-radius: 2px;
    background: #c1d8f6;
}
.vscroll button svg,
.hscroll button svg {
    width: 10px;
    height: 10px;
}
.track {
    flex: 1;
}
.thumb {
    flex: none;
    border: 1px solid #aecaec;
    border-radius: 2px;
    background: #cfe1fa;
}
.font-popup .thumb {
    height: 10px;
}
.corner {
    width: 14px;
    background: #ece9d8;
}

/* work area */
.work {
    display: flex;
    flex: 1;
    min-height: 0;
    background: linear-gradient(#eaf5ff, #bfdefb 6%, #c9e4fd 88%, #e9f5ff);
}
.panel {
    display: flex;
    flex-direction: column;
    width: 198px;
    margin-right: 6px;
}
.panel-bar {
    display: flex;
    height: 17px;
    padding-left: 1px;
    background: linear-gradient(#e4f2fe, #a5cbef);
}
.panel-body {
    display: flex;
    flex: 1;
    min-height: 0;
    background: #fff;
}
.panel-body .thumb {
    height: 26px;
}
.panel-body .gap {
    height: 12px;
}
.tree {
    display: flex;
    flex: 1;
    flex-direction: column;
    justify-content: space-between;
    overflow: hidden;
}
.roots {
    padding: 4px 3px;
}
.roots li {
    width: 8px;
    height: 8px;
    margin-bottom: 6px;
    border: 1px solid #9fb6cf;
}
.codes {
    margin-left: 8px;
    border-left: 1px dotted #999;
    font: bold 8px/14px "Liberation Mono", monospace;
}
.codes li {
    display: flex;
    align-items: center;
    gap: 3px;
    padding-left: 7px;
}
.codes svg {
    width: 14px;
    height: 13px;
}
.panel .hscroll .thumb {
    width: 96px;
}
.panel-tabs {
    display: flex;
    gap: 2px;
    height: 18px;
    padding: 1px 1px 2px;
    border-top: 1px solid #6d93bf;
    background: #cfe6fc;
}
.panel-tabs button {
    display: flex;
    align-items: center;
    gap: 1px;
    padding: 0 2px;
    border: 1px solid #7ea3cc;
    border-top: 0;
    white-space: nowrap;
    background: #bcdcf9;
}
.panel-tabs button.on {
    border-color: #a8673c;
    background: #f5b183;
}
.panel-tabs svg {
    width: 12px;
    height: 12px;
}

/* document window */
.doc {
    display: flex;
    flex: 1;
    flex-direction: column;
    min-width: 0;
}
.doc-tabs {
    display: flex;
    justify-content: space-between;
    align-items: flex-end;
    height: 17px;
    background: linear-gradient(#d5eafe, #f4faff);
}
.doc-tab {
    width: 82px;
    height: 15px;
    padding-right: 6px;
    text-align: right;
    font-size: 12px;
    font-weight: bold;
    border: 1px solid #7aa0c8;
    border-bottom: 0;
    border-radius: 0 3px 0 0;
    background: #e3f1fe;
}
.doc-nav {
    display: flex;
    gap: 1px;
    padding-right: 2px;
    padding-bottom: 5px;
}
.doc-nav svg {
    width: 10px;
    height: 10px;
}
.doc-frame {
    display: flex;
    flex: 1;
    flex-direction: column;
    min-height: 0;
    padding: 0 2px 4px;
    border: 1px solid #5f88ae;
    border-right-width: 2px;
    background: #ddeefe;
}
.ruler-h {
    display: flex;
    height: 15px;
    padding-left: 12px;
    padding-right: 11px;
    border-bottom: 1px solid #26384e;
    background: linear-gradient(#e8f4ff, #b5d6f7);
}
.ruler-h svg {
    flex: 1;
    min-width: 0;
    height: 14px;
}
.ruler-h span {
    line-height: 14px;
}
.ruler-h text,
.ruler-v text {
    font: 11px "Liberation Sans", sans-serif;
    fill: #25313f;
}
.doc-mid {
    display: flex;
    flex: 1;
    min-height: 0;
}
.ruler-v {
    width: 12px;
    border-right: 1px solid #26384e;
    background: linear-gradient(90deg, #e8f4ff, #b5d6f7);
}
.ruler-v svg {
    width: 11px;
    height: 100%;
}
.view {
    display: flex;
    flex: 1;
    flex-direction: column;
    min-width: 0;
}
.canvas {
    display: flex;
    flex: 1;
    align-items: center;
    min-height: 0;
    background: #6f6f6f;
}
.canvas .vscroll {
    align-self: stretch;
    width: 14px;
}
.label-page {
    position: relative;
    flex: 1;
    height: 237px;
    border: 1px solid #111;
    border-radius: 50px;
    background: #fff;
}
.text-object {
    position: absolute;
    z-index: 0;
    left: 124px;
    top: 48px;
    width: 201px;
    height: 50px;
    border: 1px dashed #54c83a;
    font: 300 49px/46px "Noto Sans CJK SC", sans-serif;
    white-space: nowrap;
}
.h {
    position: absolute;
    width: 7px;
    height: 7px;
    margin: -4px;
    border: 1px solid #0c4a08;
    background: #35d02a;
}
.nw, .n, .ne { top: 0; }
.w, .e { top: 50%; }
.sw, .s, .se { top: 100%; }
.nw, .w, .sw { left: 0; }
.n, .s { left: 50%; }
.ne, .e, .se { left: 100%; }
/* anchor cross behind the reference corner */
.nw::before {
    content: "";
    position: absolute;
    z-index: -1;
    inset: -3px;
    background: linear-gradient(#111, #111) center / 100% 1px no-repeat, linear-gradient(#111, #111) center / 1px 100% no-repeat;
}
.canvas .short {
    flex: 0 0 98px;
}
.canvas .thumb {
    height: 6px;
}
.view .hscroll .short {
    flex: 0 0 133px;
}
.view .hscroll .thumb {
    width: 6px;
}
.sheet-tabs {
    display: flex;
    height: 14px;
    padding-left: 3px;
}
.sheet-tabs button {
    width: 54px;
    height: 14px;
    margin-right: -4px;
    padding: 0 1px 1px;
    background: #5d86b2;
    clip-path: polygon(0 0, 100% 0, 46px 100%, 8px 100%);
}
.sheet-tabs span {
    display: block;
    height: 13px;
    background: #d2e8fd;
    clip-path: polygon(0 0, 100% 0, 45px 100%, 8px 100%);
}
.sheet-tabs .on span {
    background: #f5a878;
}

/* right dock */
.dock {
    width: 20px;
    padding-left: 1px;
}
.dock-bar {
    display: flex;
    flex-direction: column;
    align-items: center;
    padding-top: 4px;
    background: linear-gradient(90deg, #dceefe, #b0d3f5 60%, #7faee0);
}
.dots {
    width: 13px;
    height: 5px;
    background: radial-gradient(circle, #26406b 1px, transparent 1px) 0 0 / 3px 5px repeat-x;
}
.dock-bar button {
    display: grid;
    place-items: center;
    width: 16px;
    height: 17px;
    font: bold 6px/7px "Liberation Sans", sans-serif;
}
.dock-bar button svg {
    width: 14px;
    height: 14px;
    fill: none;
    stroke: #2b5573;
}
.dock-bar .dim svg {
    stroke: #94a9c0;
}
.dock-bar .turn {
    align-content: center;
}
.dock-bar .turn svg {
    height: 7px;
    stroke: none;
}
.rule {
    width: 12px;
    height: 6px;
    background: linear-gradient(#8caed2, #8caed2) center / 100% 1px no-repeat;
}
.dock-bar .dock-more {
    align-self: stretch;
    justify-content: end;
    width: auto;
    height: 9px;
    margin-top: 3px;
    background: linear-gradient(90deg, #8cb8e8, #2f69ad);
}
.dock-bar .dock-more svg {
    width: 8px;
    height: 8px;
}

/* status and task bar */
.status {
    display: flex;
    align-items: center;
    justify-content: space-between;
    height: 17px;
    padding: 0 2px;
    background: linear-gradient(#bfdefb, #dceefe);
}
.status button {
    display: flex;
    align-items: center;
    gap: 2px;
    height: 15px;
    padding-left: 3px;
    border-left: 1px solid #7fa6d0;
}
.status button svg {
    width: 14px;
    height: 14px;
}
.status button .zoom-caret {
    width: 12px;
    height: 12px;
    margin-left: 3px;
}
.taskbar {
    display: flex;
    align-items: center;
    height: 23px;
    background: linear-gradient(#4c9cf6, #2a72e4 20%, #2a72e4 80%, #1f58c4);
    color: #fff;
}
.start {
    display: flex;
    align-items: center;
    gap: 5px;
    width: 76px;
    height: 23px;
    padding-left: 8px;
    border-radius: 0 8px 8px 0;
    background: linear-gradient(#6fbf62, #3c9338 25%, #338a30 80%, #246b22);
    font: italic 15px "Noto Sans CJK SC", sans-serif;
    text-shadow: 1px 1px 1px #1b4d18;
}
.start svg {
    width: 15px;
    height: 15px;
}
.quick {
    display: flex;
    gap: 7px;
    width: 112px;
    padding-left: 40px;
}
.quick svg {
    width: 12px;
    height: 12px;
}
.task {
    display: flex;
    align-items: center;
    gap: 4px;
    width: 125px;
    height: 20px;
    margin-right: 1px;
    padding-left: 8px;
    border-radius: 2px;
    background: #3c92f5;
    font: 8px "Liberation Mono", monospace;
}
.task.on {
    background: #1f5fc0;
}
.task svg {
    width: 12px;
    height: 12px;
}
.ime {
    width: 13px;
    height: 13px;
    margin-left: auto;
    margin-right: 14px;
}
.tray {
    display: flex;
    align-items: center;
    gap: 2px;
    width: 118px;
    height: 23px;
    background: linear-gradient(#4fd0fb, #1aaaf0 20%, #18a0ea 80%, #1182cc);
}
.tray svg {
    width: 12px;
    height: 12px;
}
.tray .hide {
    margin-left: -7px;
    margin-right: 2px;
    border-radius: 50%;
    background: #3fb2f5;
}
.tray time {
    margin-left: 4px;
}
```

FILE: rulers.js
```js
// one millimetre on screen at the current zoom
const MM = 15.84;

function drawRuler(id, vertical, origin, count) {
    const svg = document.getElementById(id);
    const size = vertical ? 11 : 14;
    let out = '';
    for (let i = -5; i <= count; i++) {
        const p = Math.round(origin + i * MM);
        const len = i % 10 === 0 ? size : i % 5 === 0 ? 7 : 3;
        out += vertical
            ? `<path d="M${size - len} ${p + 0.5}h${len}" stroke="#26384e"/>`
            : `<path d="M${p + 0.5} ${size - len}v${len}" stroke="#26384e"/>`;
        if (i > 0 && i % 10 === 0) {
            out += vertical
                ? `<text transform="translate(10 ${p + 14}) rotate(-90)">${i}</text>`
                : `<text x="${p - 1}" y="10" text-anchor="end">${i}</text>`;
        }
    }
    svg.innerHTML = out;
}

drawRuler('rulerTop', false, 0, 33);
drawRuler('rulerLeft', true, 92, 22);
```
